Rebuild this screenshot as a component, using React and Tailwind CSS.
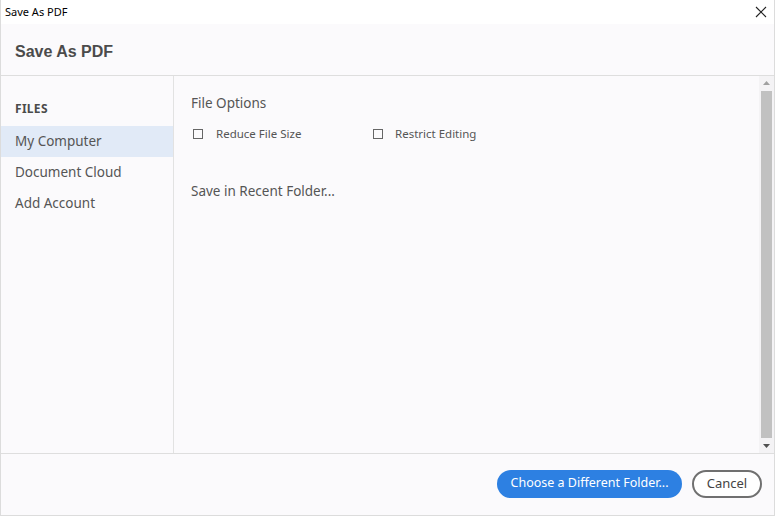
export default function App() {
  const navItem = (active) =>
    `h-[31px] flex items-center pl-[14px] text-[13.5px] text-[#555] ${
      active ? "bg-[#e1eaf7]" : ""
    }`;

  return (
    <div
      className="w-[775px] h-[516px] flex flex-col bg-[#fbfafc] border-x border-b border-[#dcdcdc] overflow-hidden"
      style={{ fontFamily: '"Segoe UI", "Noto Sans", sans-serif' }}
    >
      <div className="h-[24px] shrink-0 bg-white flex items-center justify-between pl-[4px] pr-[6px]">
        <span className="text-[11px] text-black">Save As PDF</span>
        <svg width="12" height="12" viewBox="0 0 12 12" className="mr-[1px]">
          <path d="M1 1L11 11M11 1L1 11" stroke="#222" strokeWidth="1.1" />
        </svg>
      </div>
      <div className="h-[52px] shrink-0 flex items-center pl-[14px] pt-[4px] border-b border-[#dedede]">
        <span
          className="text-[16px] font-bold text-[#4b4b4b]"
          style={{ fontFamily: '"Liberation Sans", Arial, sans-serif' }}
        >
          Save As PDF
        </span>
      </div>
      <div className="flex-1 flex min-h-0 border-b border-[#dedede]">
        <div className="w-[173px] shrink-0 border-r border-[#e2e2e2] pt-[20px]">
          <div className="pl-[14px] text-[12px] font-bold tracking-[0.3px] text-[#4b4b4b] h-[26px] flex items-center">
            FILES
          </div>
          <div className="h-[4px]" />
          <div className={navItem(true)}>My Computer</div>
          <div className={navItem(false)}>Document Cloud</div>
          <div className={navItem(false)}>Add Account</div>
        </div>
        <div className="flex-1 pl-[17px] pt-[17px]">
          <div className="text-[13.5px] text-[#555]">File Options</div>
          <div className="flex items-center mt-[12px] text-[11.5px] text-[#555]">
            <div className="w-[182px] flex items-center">
              <span className="w-[10px] h-[10px] border border-[#666] mr-[13px] ml-[2px]" />
              <span>Reduce File Size</span>
            </div>
            <div className="flex items-center">
              <span className="w-[10px] h-[10px] border border-[#666] mr-[12px]" />
              <span>Restrict Editing</span>
            </div>
          </div>
          <div className="text-[13.5px] text-[#555] mt-[38px]">Save in Recent Folder...</div>
        </div>
        <div className="w-[15px] shrink-0 flex flex-col items-center bg-[#f4f3f5]">
          <div className="h-[14px] flex items-center justify-center">
            <svg width="7" height="4" viewBox="0 0 7 4">
              <path d="M0 4L3.5 0L7 4Z" fill="#a0a0a0" />
            </svg>
          </div>
          <div className="flex-1 w-[11px] bg-[#c1c1c1] my-[1px]" />
          <div className="h-[14px] flex items-center justify-center">
            <svg width="7" height="4" viewBox="0 0 7 4">
              <path d="M0 0L3.5 4L7 0Z" fill="#505050" />
            </svg>
          </div>
        </div>
      </div>
      <div className="h-[61px] shrink-0 flex items-center justify-end gap-[10px] pr-[12px] pb-[2px]">
        <button className="h-[28px] w-[185px] rounded-full bg-[#2d80e2] text-white text-[12.5px]">
          Choose a Different Folder...
        </button>
        <button className="h-[28px] w-[70px] rounded-full border-2 border-[#707070] bg-white text-[#444] text-[13px]">
          Cancel
        </button>
      </div>
    </div>
  );
}
